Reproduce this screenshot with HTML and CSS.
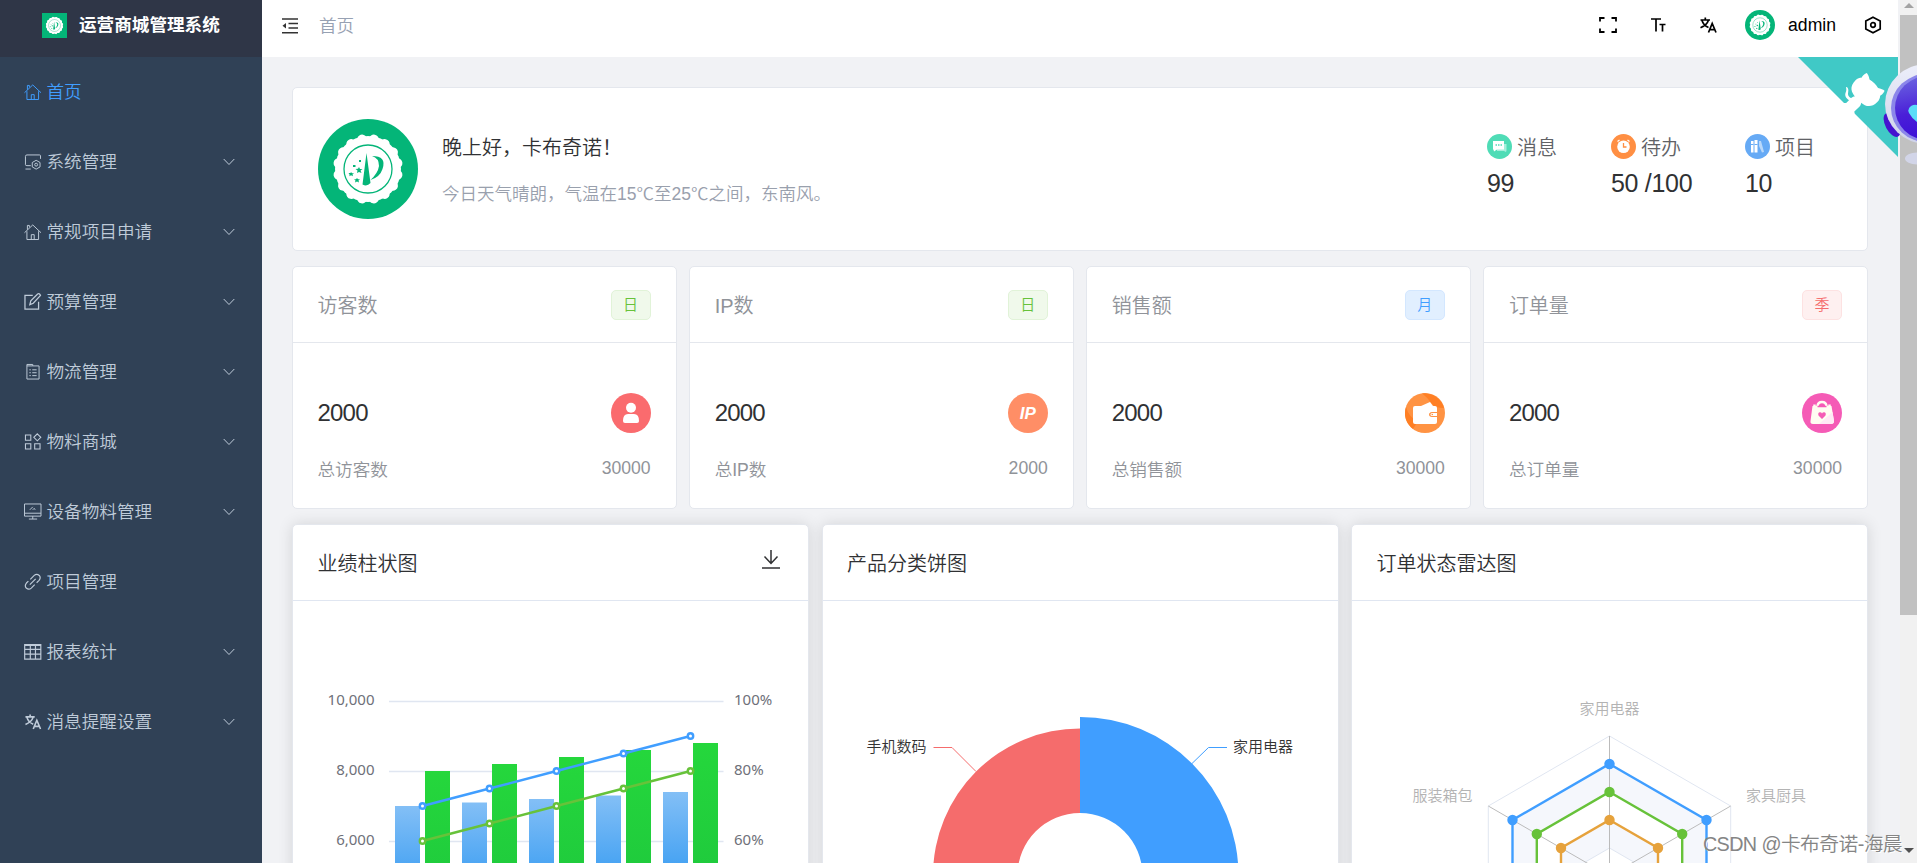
FILE: index.html
```
<!DOCTYPE html>
<html lang="zh-CN">
<head>
  <meta charset="UTF-8" />
  <title>运营商城管理系统</title>
  <meta name="viewport" content="width=device-width, initial-scale=1" />
  <link rel="stylesheet" href="styles.css">
</head>
<body>
  <svg class="defs" width="0" height="0">
    <symbol id="logo" viewBox="0 0 100 100">
      <rect width="100" height="100" fill="#04b578"/>
      <circle cx="50" cy="50" r="33" fill="#fff"/>
      <circle cx="50" cy="50" r="30" fill="none" stroke="#fff" stroke-width="10" stroke-linecap="round" pathLength="160" stroke-dasharray="0 10" transform="rotate(11.25 50 50)"/>
      <circle cx="50" cy="50" r="24" fill="none" stroke="#04b578" stroke-width="1.3"/>
      <path d="M48.500 34 L52.500 64 Q49 68 44.500 65.500 Z M54 37 Q69 37 64.500 50 Q62 58 52.500 61 Q60 54 61 47 Q61 39 54 37Z M41 48l1 2h2.500l-2 1.500 1 2.500-2.500-1-2 1 .5-2.500-2-1.500 2.500-.3z M33 53l1 1.200h2l-1.500 1.200.5 1.800-2-1-1.500 1v-2l-1-1.200h2z M39 59l1 1.200h2l-1.500 1.200.5 2-2-1-2 1 .5-2-1.500-1.200h2z M35 46h2.500v2h-2.500z M41 41h2v2h-2z" fill="#04b578"/>
    </symbol>
    <symbol id="home" viewBox="0 0 18 18">
      <path d="M.5 10 9 2 17.500 10M3 8.500V17H15V8.500M7.500 17V12H10.500V17M3.500 7V2.500H5.500V4.500"/>
    </symbol>
    <symbol id="down" viewBox="0 0 12 12"><path d="M.7 3 6 8.500 11.300 3"/></symbol>
    <symbol id="lang" viewBox="0 0 18 18">
      <path d="M1.500 4H11M6.300 1.500V4M3 4.500Q4.500 9.500 9.500 11.500M9.300 4.500Q8 9 1.500 11.800M9.500 16.500 13.200 7.500 17 16.500M10.800 13.700H15.700" stroke-width="1.700"/>
    </symbol>
  </svg>

  <div class="app">
    <aside class="sidebar">
      <div class="brand">
        <svg class="brand-logo"><use href="#logo"/></svg>
        <h1>运营商城管理系统</h1>
      </div>
      <ul class="menu">
        <li class="active"><svg class="icon"><use href="#home"/></svg><span>首页</span></li>
        <li>
          <svg class="icon" viewBox="0 0 18 18"><path d="M17 6V3Q17 2 16 2H3Q1.500 2 1.500 3.500V12Q1.500 13 3 13H7M1.500 16.500H7"/><path d="M12.500 7.500 16.500 9.800V14.300L12.500 16.600 8.500 14.300V9.800Z"/><circle cx="12.500" cy="12" r="1.500"/></svg>
          <span>系统管理</span><svg class="arrow"><use href="#down"/></svg>
        </li>
        <li><svg class="icon"><use href="#home"/></svg><span>常规项目申请</span><svg class="arrow"><use href="#down"/></svg></li>
        <li>
          <svg class="icon" viewBox="0 0 18 18"><path d="M9 2.500H1V16.500H15V9M6 12 7 8 14 1Q16 0 17 2.500L9.500 10.500Z" stroke-width="1.300"/></svg>
          <span>预算管理</span><svg class="arrow"><use href="#down"/></svg>
        </li>
        <li>
          <svg class="icon" viewBox="0 0 18 18"><path d="M3 16.500V1.500H9V3H15.500V16.500ZM3 3H9M5.500 7H7M8.500 7H13M5.500 10H7M8.500 10H13M5.500 13H7M8.500 13H13"/></svg>
          <span>物流管理</span><svg class="arrow"><use href="#down"/></svg>
        </li>
        <li>
          <svg class="icon" viewBox="0 0 18 18"><path d="M1.500 2H7V7.500H1.500ZM1.500 11H7V16.500H1.500ZM11 11H16.500V16.500H11ZM13.700.8 17.300 4.400 13.700 8 10.100 4.400Z" stroke-width="1.100"/></svg>
          <span>物料商城</span><svg class="arrow"><use href="#down"/></svg>
        </li>
        <li>
          <svg class="icon" viewBox="0 0 18 18"><path d="M.5 1H17.500V13.500H.5ZM.5 10.500H17.500M6 7 9 4M9 7 10.500 5.500 11.500 7M9 13.500V16.500M5 16.500H13.500"/></svg>
          <span>设备物料管理</span><svg class="arrow"><use href="#down"/></svg>
        </li>
        <li>
          <svg class="icon" viewBox="0 0 18 18"><path d="M6.500 6.500 10.500 2.500Q13 .3 15.700 2.500 17.700 5 15.500 7.500L13 10M11 12 7.500 15.500Q5 17.700 2.300 15.500 .3 13 2.500 10.300L4.500 8.300M6 12 12 6" stroke-width="1.200"/></svg>
          <span>项目管理</span>
        </li>
        <li>
          <svg class="icon" viewBox="0 0 18 18"><path d="M.7 1.500H17.300V16.500H.7ZM.7 2.500H17.300M.7 6.500H17.300M.7 11.500H17.300M6.500 2V16.500M11.800 2V16.500" stroke-width="1.200"/></svg>
          <span>报表统计</span><svg class="arrow"><use href="#down"/></svg>
        </li>
        <li><svg class="icon lang"><use href="#lang"/></svg><span>消息提醒设置</span><svg class="arrow"><use href="#down"/></svg></li>
      </ul>
    </aside>

    <div class="page">
      <header class="topbar">
        <svg class="toggle" viewBox="0 0 16 16"><path d="M0 1H16M6.500 5.500H16M6.500 10H16M0 14.800H16" fill="none" stroke="#333" stroke-width="1.400"/><path d="M.5 7.700 4 5V10.500Z" fill="#333"/></svg>
        <span class="crumb">首页</span>
        <div class="tools">
          <svg class="tool" viewBox="0 0 18 18"><path d="M1 5.500V2H5.500M12.500 2H17V5.500M17 12.500V16H12.500M5.500 16H1V12.500" stroke-width="1.800"/></svg>
          <svg class="tool" viewBox="0 0 18 18"><path d="M2 3H12M7 3V15.500M10.500 8.500H16.500M13.500 8.500V15.500" stroke-width="1.700"/></svg>
          <svg class="tool"><use href="#lang"/></svg>
          <div class="user">
            <svg class="user-face"><use href="#logo"/></svg>
            <span>admin</span>
          </div>
          <svg class="tool gear" viewBox="0 0 18 18"><path d="M9 1.200 16.200 5V13L9 16.800 1.800 13V5Z" stroke-width="1.700"/><circle cx="9" cy="9" r="2.300" stroke-width="1.700"/></svg>
        </div>
      </header>

      <main>
        <svg class="corner" viewBox="0 0 250 250">
          <path d="M0,0 L115,115 L130,115 L142,142 L250,250 L250,0 Z" fill="#40c9c6"/>
          <path d="M128.300,109 C113.800,99.700 119,89.600 119,89.600 C122,82.700 120.500,78.600 120.500,78.600 C119.200,72 123.400,76.300 123.400,76.300 C127.300,80.900 125.500,87.300 125.500,87.300 C122.900,97.600 130.600,101.900 134.400,103.200" fill="#fff"/>
          <path d="M115,115 C114.900,115.100 118.700,116.500 119.800,115.400 L133.700,101.600 C136.900,99.200 139.900,98.400 142.200,98.600 C133.800,88 127.500,74.400 143.800,58 C148.500,53.400 154,51.200 159.700,51 C160.300,49.400 163.200,43.600 171.400,40.100 C171.400,40.100 176.100,42.500 178.800,56.200 C183.100,58.600 187.200,61.800 190.900,65.400 C194.500,69 197.700,73.200 200.100,77.600 C213.800,80.200 216.300,84.900 216.300,84.900 C212.700,93.100 206.900,96 205.400,96.600 C205.100,102.400 203,107.800 198.300,112.500 C181.900,128.900 168.300,122.500 157.700,114.100 C157.900,116.900 156.700,120.900 152.700,124.900 L141,136.500 C139.800,137.700 141.600,141.900 141.800,141.800 Z" fill="#fff"/>
        </svg>

        <section class="card welcome">
          <svg class="face"><use href="#logo"/></svg>
          <div class="hello">
            <p class="greet">晚上好，卡布奇诺！</p>
            <p class="weather">今日天气晴朗，气温在15℃至25℃之间，东南风。</p>
          </div>
          <div class="counts">
            <div class="count msg">
              <div class="count-name">
                <svg viewBox="0 0 25 25"><circle cx="12.500" cy="12.500" r="12.500" fill="#4fdcb6"/><path d="M17 10H19.500V16.500L19 18 17 17H10V15H17Z" fill="#a6efdc"/><path d="M6 7H17V15.500H10L7 17.500 6.500 15.500H6Z" fill="#fff"/><path d="M8.500 11H10M11 11H12.500M13.500 11H15" stroke="#4fdcb6" stroke-width="1.500"/></svg>
                <span>消息</span>
              </div>
              <div class="count-num">99</div>
            </div>
            <div class="count todo">
              <div class="count-name">
                <svg viewBox="0 0 25 25"><circle cx="12.500" cy="12.500" r="12.500" fill="#ff8f43"/><circle cx="12.500" cy="12.800" r="6.300" fill="#fff"/><path d="M6.500 7.500 8.500 6M18.500 7.500 16.500 6" stroke="#fff" stroke-width="1.300"/><path d="M12.500 9V13H15.500" fill="none" stroke="#ff8f43" stroke-width="1.300"/></svg>
                <span>待办</span>
              </div>
              <div class="count-num">50 /100</div>
            </div>
            <div class="count proj">
              <div class="count-name">
                <svg viewBox="0 0 25 25"><circle cx="12.500" cy="12.500" r="12.500" fill="#66aaf5"/><path d="M6 7H8.500V18.500H6ZM9.500 6H12.500V18.500H9.500Z" fill="#fff"/><path d="M14 7H16L19 18 17 18.500 14 12Z" fill="#b9d8fa"/><path d="M6 10.500H8.500M9.500 10.500H12.500" stroke="#66aaf5"/></svg>
                <span>项目</span>
              </div>
              <div class="count-num">10</div>
            </div>
          </div>
        </section>

        <section class="stats">
          <div class="card stat">
            <div class="stat-head"><span>访客数</span><em class="tag green">日</em></div>
            <div class="stat-body">
              <div class="stat-main">
                <span>2000</span>
                <svg viewBox="0 0 40 40"><circle cx="20" cy="20" r="20" fill="#fa6b6e"/><circle cx="20" cy="14.700" r="5" fill="#fff"/><path d="M12 28Q12 21 17 21H23Q28 21 28 28 28 30 26 30H14Q12 30 12 28Z" fill="#fff"/></svg>
              </div>
              <div class="stat-sum"><span>总访客数</span><span>30000</span></div>
            </div>
          </div>
          <div class="card stat">
            <div class="stat-head"><span>IP数</span><em class="tag green">日</em></div>
            <div class="stat-body">
              <div class="stat-main">
                <span>2000</span>
                <svg viewBox="0 0 40 40"><circle cx="20" cy="20" r="20" fill="#ff8e66"/><text class="ip" x="19.800" y="26" text-anchor="middle">IP</text></svg>
              </div>
              <div class="stat-sum"><span>总IP数</span><span>2000</span></div>
            </div>
          </div>
          <div class="card stat">
            <div class="stat-head"><span>销售额</span><em class="tag blue">月</em></div>
            <div class="stat-body">
              <div class="stat-main">
                <span>2000</span>
                <svg viewBox="0 0 40 40"><circle cx="20" cy="20" r="20" fill="#ff9343"/><path d="M17 .3Q34 0 39 15 30 15 27 11 23 5 17 .3ZM1 14Q4 25 13 28L8 36Q-3 27 1 14Z" fill="#ff7f24"/><path d="M16 13 25 9 28 13Z" fill="#fff"/><rect x="8" y="13" width="24" height="18" rx="2" fill="#fff"/><path d="M33 19H27Q24 19.500 24 21.500 24 23.500 27 24H33Z" fill="#ff9343"/><path d="M32 20H27Q25.500 20 25.500 21.500 25.500 23 27 23H32Z" fill="#fff"/><circle cx="27.300" cy="21.500" r=".8" fill="#ff9343"/></svg>
              </div>
              <div class="stat-sum"><span>总销售额</span><span>30000</span></div>
            </div>
          </div>
          <div class="card stat">
            <div class="stat-head"><span>订单量</span><em class="tag red">季</em></div>
            <div class="stat-body">
              <div class="stat-main">
                <span>2000</span>
                <svg viewBox="0 0 40 40"><circle cx="20" cy="20" r="20" fill="#f55bb6"/><path d="M10.500 13H29.500L32 28Q32 31 29 31H11Q8 31 8.500 28Z" fill="#fffdf2"/><path d="M30.500 19 32 28Q32 31 29 31H17Z" fill="#ffeaf5"/><path d="M15.500 15V13Q16 9 20 9T24.500 13V15" fill="none" stroke="#fffdf2" stroke-width="2.400"/><path d="M15.500 13.500H24.500" stroke="#f55bb6" stroke-width="1.500"/><path d="M12.500 14V11.500M27.500 14V11.500" stroke="#fffdf2" stroke-width="2.500"/><path d="M20 26 16.500 22.500Q15.500 19.500 18 19.200 19.500 19.300 20 20.500 20.500 19.300 22 19.200 24.500 19.500 23.500 22.500Z" fill="#f55bb6"/></svg>
              </div>
              <div class="stat-sum"><span>总订单量</span><span>30000</span></div>
            </div>
          </div>
        </section>

        <section class="charts">
          <div class="card chart">
            <div class="chart-head">
              <span>业绩柱状图</span>
              <svg class="download" viewBox="0 0 20 20"><path d="M10 0V13.500M3.500 6.500 10 13.500 16.500 6.500M1 18H19" fill="none" stroke="#303133" stroke-width="1.500"/></svg>
            </div>
            <svg class="plot" viewBox="0 0 515 500">
              <defs>
                <linearGradient id="barBlue" x1="0" y1="0" x2="0" y2="1"><stop offset="0" stop-color="#83bff6"/><stop offset=".5" stop-color="#188df0"/><stop offset="1" stop-color="#188df0"/></linearGradient>
                <linearGradient id="barGreen" x1="0" y1="0" x2="0" y2="1"><stop offset="0" stop-color="#25d73c"/><stop offset=".7" stop-color="#1bc23d"/><stop offset="1" stop-color="#179e61"/></linearGradient>
              </defs>
              <g class="axis-text">
                <text x="81.500" y="104" text-anchor="end">10,000</text>
                <text x="81.500" y="174" text-anchor="end">8,000</text>
                <text x="81.500" y="244" text-anchor="end">6,000</text>
                <text x="441" y="104">100%</text>
                <text x="441" y="174">80%</text>
                <text x="441" y="244">60%</text>
              </g>
              <path d="M96 100.500H430.500M96 170.500H430.500M96 240.500H430.500" stroke="#e0e6f1" stroke-width="1.300"/>
              <g fill="url(#barBlue)">
                <rect x="102" y="205" width="25" height="245"/>
                <rect x="169" y="201.500" width="25" height="248.500"/>
                <rect x="236" y="198" width="25" height="252"/>
                <rect x="303" y="194.500" width="25" height="255.500"/>
                <rect x="370" y="191" width="25" height="259"/>
              </g>
              <g fill="url(#barGreen)">
                <rect x="132" y="170" width="25" height="280"/>
                <rect x="199" y="163" width="25" height="287"/>
                <rect x="266" y="156" width="25" height="294"/>
                <rect x="333" y="149" width="25" height="301"/>
                <rect x="400" y="142" width="25" height="308"/>
              </g>
              <g class="line" stroke="#409eff">
                <polyline points="129.500,205 196.500,187.500 263.500,170 330.500,152.500 397.500,135"/>
                <circle cx="129.500" cy="205" r="2.700"/><circle cx="196.500" cy="187.500" r="2.700"/><circle cx="263.500" cy="170" r="2.700"/><circle cx="330.500" cy="152.500" r="2.700"/><circle cx="397.500" cy="135" r="2.700"/>
              </g>
              <g class="line" stroke="#67c23a">
                <polyline points="129.500,240 196.500,222.500 263.500,205 330.500,187.500 397.500,170"/>
                <circle cx="129.500" cy="240" r="2.700"/><circle cx="196.500" cy="222.500" r="2.700"/><circle cx="263.500" cy="205" r="2.700"/><circle cx="330.500" cy="187.500" r="2.700"/><circle cx="397.500" cy="170" r="2.700"/>
              </g>
            </svg>
          </div>

          <div class="card chart">
            <div class="chart-head"><span>产品分类饼图</span></div>
            <svg class="plot" viewBox="0 0 515 500">
              <path d="M257 116A158.500 158.500 0 0 1 415.500 274.500H319.500A62.500 62.500 0 0 0 257 212Z" fill="#409eff"/>
              <path d="M257 127.500A147 147 0 0 0 110 274.500H194.500A62.500 62.500 0 0 1 257 212Z" fill="#f56c6c"/>
              <path d="M369 162.500 385.500 146.500H404" fill="none" stroke="#409eff"/>
              <path d="M153 170.500 129 146.500H110.500" fill="none" stroke="#f56c6c"/>
              <g class="pie-text">
                <text x="410" y="151">家用电器</text>
                <text x="103.500" y="151" text-anchor="end">手机数码</text>
              </g>
            </svg>
          </div>

          <div class="card chart">
            <div class="chart-head"><span>订单状态雷达图</span></div>
            <svg class="plot" viewBox="0 0 515 500">
              <g stroke="#e0e6f1" fill="none">
                <polygon points="257.500,135 378.700,205 378.700,345 257.500,415 136.300,345 136.300,205"/>
                <polygon points="257.500,163 354.500,219 354.500,331 257.500,387 160.500,331 160.500,219" fill="#f5f7fc"/>
                <polygon points="257.500,191 330.200,233 330.200,317 257.500,359 184.800,317 184.800,233" fill="#fff"/>
                <polygon points="257.500,219 306,247 306,303 257.500,331 209,303 209,247" fill="#f5f7fc"/>
                <polygon points="257.500,247 281.700,261 281.700,289 257.500,303 233.300,289 233.300,261" fill="#fff"/>
              </g>
              <path d="M257.500 135V415M136.300 205 378.700 345M378.700 205 136.300 345" stroke="#bbb"/>
              <g class="ring" stroke="#409eff" fill="#409eff">
                <polygon points="257.500,163 354.500,219 354.500,331 257.500,387 160.500,331 160.500,219"/>
                <circle cx="257.500" cy="163" r="4"/><circle cx="354.500" cy="219" r="4"/><circle cx="160.500" cy="219" r="4"/>
              </g>
              <g class="ring" stroke="#67c23a" fill="#67c23a">
                <polygon points="257.500,191 330.200,233 330.200,317 257.500,359 184.800,317 184.800,233"/>
                <circle cx="257.500" cy="191" r="4"/><circle cx="330.200" cy="233" r="4"/><circle cx="184.800" cy="233" r="4"/>
              </g>
              <g class="ring" stroke="#e6a23c" fill="#e6a23c">
                <polygon points="257.500,219 306,247 306,303 257.500,331 209,303 209,247"/>
                <circle cx="257.500" cy="219" r="4"/><circle cx="306" cy="247" r="4"/><circle cx="209" cy="247" r="4"/>
              </g>
              <g class="radar-text">
                <text x="257.500" y="112.500" text-anchor="middle">家用电器</text>
                <text x="120.500" y="199.500" text-anchor="end">服装箱包</text>
                <text x="394" y="199.500">家具厨具</text>
              </g>
            </svg>
          </div>
        </section>
      </main>
    </div>

    <div class="scrollbar">
      <i class="up"></i>
      <div class="thumb"></div>
      <i class="down"></i>
    </div>
  </div>

  <!-- floating assistant -->
  <svg class="robot" viewBox="0 0 37 115">
    <defs>
      <linearGradient id="shell" x1="0" y1="0" x2="0" y2="1"><stop offset="0" stop-color="#eceefa"/><stop offset="1" stop-color="#cfd3ea"/></linearGradient>
      <linearGradient id="face" x1=".3" y1="0" x2=".5" y2="1"><stop offset="0" stop-color="#6a63e0"/><stop offset=".55" stop-color="#4a1fd8"/><stop offset="1" stop-color="#3b0fd6"/></linearGradient>
    </defs>
    <ellipse cx="12" cy="75" rx="6.500" ry="13" fill="#4513cf" transform="rotate(-28 12 75)"/>
    <ellipse cx="47" cy="54" rx="42" ry="40" fill="url(#shell)"/>
    <ellipse cx="48" cy="58" rx="37" ry="34.500" fill="#8b86ea"/>
    <ellipse cx="48" cy="58" rx="33" ry="32" fill="url(#face)"/>
    <path d="M40 57Q36 53 31 56 27 59 29 63 32 69 40 74Z" fill="#5adcf8"/>
    <ellipse cx="37" cy="108.500" rx="12" ry="6" fill="#d2d5e8"/>
  </svg>
  <div class="watermark">CSDN @卡布奇诺-海晨</div>
</body>
</html>
```
FILE: styles.css
```
* {
  box-sizing: border-box;
}
body {
  margin: 0;
  height: 100vh;
  overflow: hidden;
  font-family: "Liberation Sans", "Noto Sans CJK SC", sans-serif;
  font-size: 17.6px;
  font-weight: 350;
  color: #303133;
  background: #f1f2f5;
}
p, h1, ul {
  margin: 0;
  padding: 0;
}
.defs {
  position: absolute;
}
.app {
  display: flex;
  height: 100vh;
}

/* sidebar */
.sidebar {
  width: 262px;
  flex: none;
  background: #304156;
}
.brand {
  height: 57px;
  padding: 0 0 6px 42px;
  display: flex;
  align-items: center;
  gap: 12px;
  background: #2f3647;
}
.brand-logo {
  width: 25px;
  height: 25px;
}
.brand h1 {
  padding-bottom: 1px;
  font-size: 17.6px;
  font-weight: 700;
  line-height: 24px;
  color: #fff;
}
.menu {
  list-style: none;
}
.menu li {
  height: 70px;
  padding: 0 27px 0 24px;
  display: flex;
  align-items: center;
  color: #bfcbd9;
}
.menu li.active {
  color: #409eff;
}
.menu span {
  margin-left: 5px;
  padding-bottom: 3px;
  flex: 1;
}
.icon {
  width: 17.5px;
  height: 17.5px;
  fill: none;
  stroke: currentColor;
}
.arrow {
  width: 12px;
  height: 12px;
  fill: none;
  stroke: currentColor;
}

/* top bar */
.page {
  flex: 1;
  min-width: 0;
  display: flex;
  flex-direction: column;
}
.topbar {
  height: 57px;
  flex: none;
  margin-right: 2px;
  padding: 0 16px 7px 20px;
  display: flex;
  align-items: center;
  background: #fff;
}
.toggle {
  width: 16px;
  height: 16px;
  margin-top: 1px;
}
.crumb {
  margin-left: 21px;
  padding-bottom: 2px;
  color: #97a1b3;
}
.tools {
  margin-left: auto;
  display: flex;
  align-items: center;
  color: #000;
}
.tool {
  width: 18px;
  height: 18px;
  margin-right: 32px;
  fill: none;
  stroke: currentColor;
}
.user {
  display: flex;
  align-items: center;
  gap: 13px;
  margin-left: -4px;
}
.user-face {
  width: 30px;
  height: 30px;
  border-radius: 50%;
}
.tool.gear {
  margin: 0 0 0 28px;
}

/* content */
main {
  position: relative;
  flex: 1;
  min-height: 0;
  overflow: hidden;
  padding: 30px 32px 0 30px;
}
.corner {
  position: absolute;
  z-index: 2;
  top: 0;
  right: 2px;
  width: 100px;
  height: 100px;
}
.card {
  background: #fff;
  border: 1px solid #e4e7ed;
  border-radius: 5px;
}
.welcome {
  height: 164px;
  padding: 0 0 0 25px;
  display: flex;
  align-items: center;
}
.face {
  width: 100px;
  height: 100px;
  border-radius: 50%;
}
.hello {
  margin-left: 24px;
  padding-top: 2px;
}
.greet {
  font-size: 20px;
  line-height: 30px;
}
.weather {
  margin-top: 18px;
  line-height: 26px;
  font-size: 17.5px;
  color: #99a0ad;
}
.counts {
  margin-left: auto;
  display: flex;
  padding-bottom: 9px;
}
.count.msg {
  width: 124px;
}
.count.todo {
  width: 134px;
}
.count.proj {
  width: 122px;
}
.count-name {
  display: flex;
  align-items: center;
  gap: 5px;
  height: 30px;
  font-size: 20px;
  color: #606266;
}
.count-name svg {
  width: 25px;
  height: 25px;
}
.count-name span {
  padding-bottom: 1px;
}
.count-num {
  margin-top: 6px;
  font-size: 25px;
  line-height: 30px;
  letter-spacing: -0.3px;
}

.stats {
  display: flex;
  gap: 12.5px;
  margin-top: 15px;
}
.stat {
  flex: 1;
  height: 243px;
}
.stat-head {
  height: 76px;
  padding: 0 25px 0 24.5px;
  display: flex;
  align-items: center;
  justify-content: space-between;
  border-bottom: 1px solid #e4e7ed;
  font-size: 20px;
  color: #909399;
}
.tag {
  height: 30px;
  padding: 0 11.5px;
  border: 1px solid;
  border-radius: 5px;
  font-size: 15px;
  font-style: normal;
  line-height: 27px;
}
.tag.green {
  color: #67c23a;
  background: #f0f9eb;
  border-color: #e1f3d8;
}
.tag.blue {
  color: #409eff;
  background: #e1efff;
  border-color: #d3e7ff;
}
.tag.red {
  color: #f56c6c;
  background: #fef0f0;
  border-color: #fde2e2;
}
.stat-body {
  padding: 50px 25px 0 24.5px;
}
.stat-main {
  height: 40px;
  display: flex;
  align-items: center;
  justify-content: space-between;
  font-size: 24px;
  letter-spacing: -0.8px;
}
.stat-main svg {
  width: 40px;
  height: 40px;
}
.ip {
  font: italic 700 17px "Liberation Sans", sans-serif;
  letter-spacing: 0;
  fill: #fff;
}
.stat-sum {
  margin-top: 22px;
  height: 26px;
  display: flex;
  align-items: center;
  justify-content: space-between;
  color: #909399;
}

.charts {
  display: flex;
  gap: 12.5px;
  margin-top: 15px;
}
.chart {
  flex: 1;
  box-shadow: 0 0 15px rgba(0, 0, 0, 0.12);
}
.chart-head {
  height: 76px;
  padding: 0 27px 0 24.5px;
  display: flex;
  align-items: center;
  justify-content: space-between;
  border-bottom: 1px solid #e0e6f1;
  font-size: 20px;
}
.download {
  width: 20px;
  height: 20px;
  margin-bottom: 5px;
}
.plot {
  display: block;
  width: 515px;
  height: 500px;
  font-size: 15px;
}
.axis-text {
  font-family: "Noto Sans", sans-serif;
  font-weight: 400;
  fill: #6e7079;
}
.line {
  fill: #fff;
  stroke-width: 2.4;
}
.line polyline {
  fill: none;
}
.pie-text {
  fill: #333;
}
.ring {
  stroke-width: 2.4;
}
.ring polygon {
  fill: none;
}
.radar-text {
  fill: #b3b3b3;
}

/* scrollbar */
.scrollbar {
  width: 17px;
  flex: none;
  display: flex;
  flex-direction: column;
  align-items: center;
  padding: 3px 0 10px;
  background: #f1f1f1;
}
.scrollbar i {
  border: 5px solid transparent;
}
.scrollbar .up {
  border-top: 0;
  border-bottom-color: #a3a3a3;
}
.scrollbar .down {
  margin-top: auto;
  border-bottom: 0;
  border-top-color: #505050;
}
.thumb {
  width: 17px;
  height: 600px;
  margin-top: 7px;
  background: #c1c1c1;
}

.robot {
  position: absolute;
  z-index: 3;
  top: 50px;
  right: 0;
  width: 37px;
  height: 115px;
}
.watermark {
  position: absolute;
  z-index: 3;
  right: 15px;
  bottom: 5px;
  font-size: 19.8px;
  letter-spacing: -0.6px;
  line-height: 28px;
  color: #858585;
  text-shadow: 1px 1px 0 #fff;
}
```
